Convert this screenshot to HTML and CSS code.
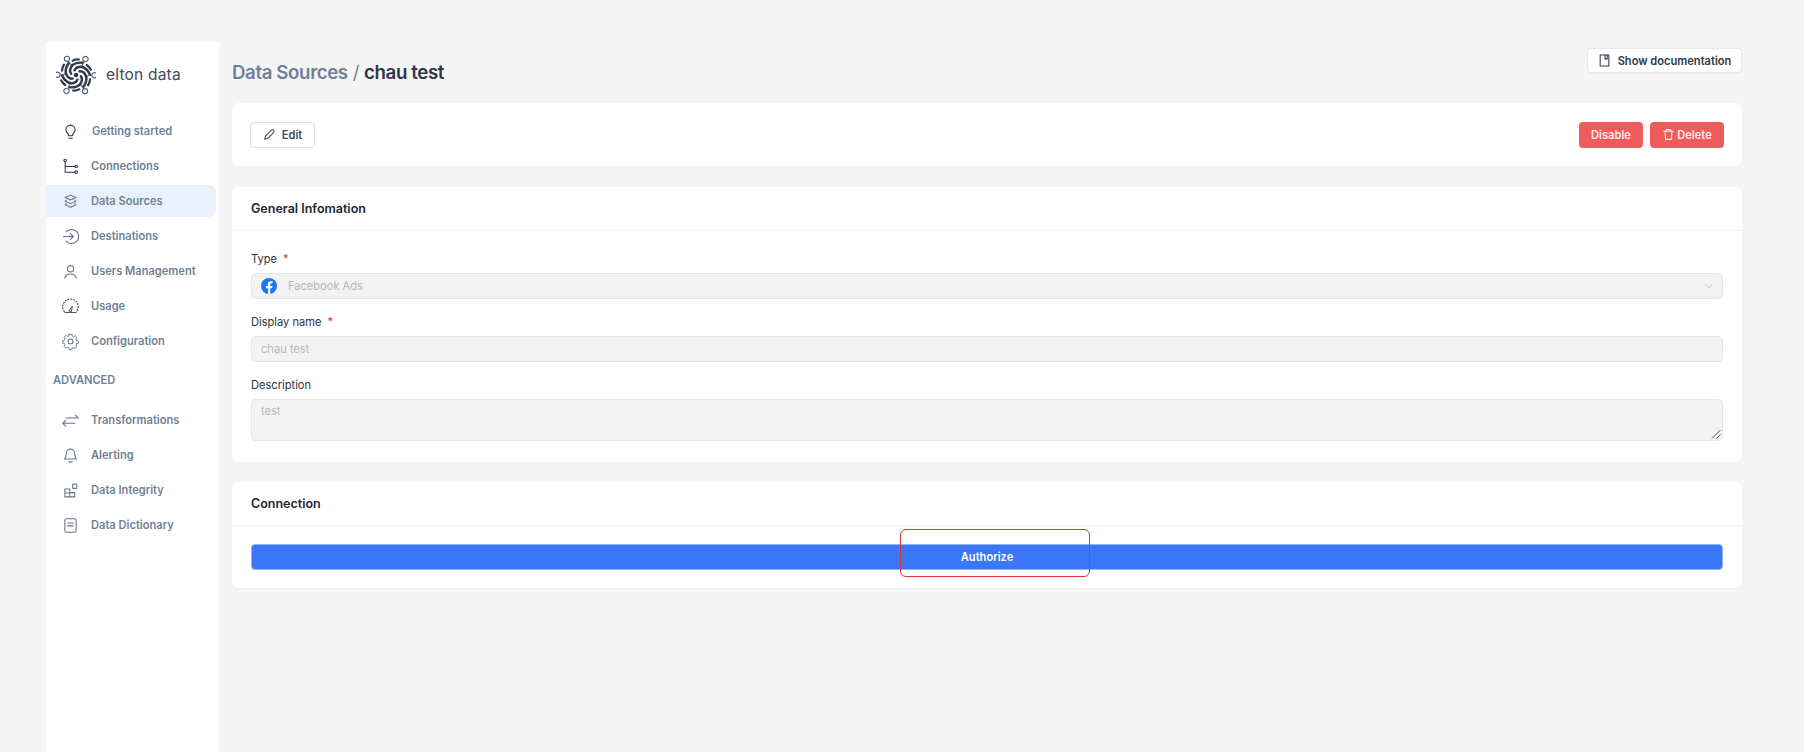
FILE: index.html
```html
<!DOCTYPE html>
<html lang="en">
<head>
<meta charset="utf-8">
<title>chau test</title>
<link rel="stylesheet" href="styles.css">
</head>
<body>
<div class="app">
  <aside class="sidebar">
    <div class="brand">
      <svg class="logo" viewBox="-21 -21 42 42" fill="none" stroke="#2f3b4d" stroke-width="2.600" stroke-linecap="round">
        <defs>
          <g id="arm">
            <path d="M-1.500-5C-.5-7.500 3-9 7-8.500"/>
            <path d="M-4.500-9.500C-2-12 2-13.500 7-12.800"/>
            <path d="M-3.500-15C-1.500-16 1-16.500 3-16.300" stroke-width="2.300"/>
          </g>
          <g id="ring">
            <path d="M-8-14.500L-5.500-11" stroke="#556173" stroke-width="1.100"/>
            <circle cx="-9.500" cy="-17" r="2.700" fill="#fff" stroke="#556173" stroke-width="1.200"/>
          </g>
        </defs>
        <use href="#arm"/>
        <use href="#arm" transform="rotate(60)"/>
        <use href="#arm" transform="rotate(120)"/>
        <use href="#arm" transform="rotate(180)"/>
        <use href="#arm" transform="rotate(240)"/>
        <use href="#arm" transform="rotate(300)"/>
        <use href="#ring"/>
        <use href="#ring" transform="rotate(60)"/>
        <use href="#ring" transform="rotate(120)"/>
        <use href="#ring" transform="rotate(180)"/>
        <use href="#ring" transform="rotate(240)"/>
        <use href="#ring" transform="rotate(300)"/>
        <circle r="2.400" fill="#2f3b4d" stroke="none"/>
      </svg>
      <span class="brand-name">elton data</span>
    </div>
    <nav class="nav">
      <a class="nav-item nav-item-first">
        <svg class="icon icon-dark" viewBox="0 0 24 24"><path d="M9.500 21.500h5M9 18h6M8 14.500C6.300 13.200 5.500 11.500 5.500 9.500a6.500 6.500 0 0 1 13 0c0 2-.8 3.700-2.500 5-.7.600-1 1.300-1 3.500H9c0-2.200-.3-2.900-1-3.500z"/></svg>
        <span>Getting started</span>
      </a>
      <a class="nav-item">
        <svg class="icon icon-dark" viewBox="0 0 24 24"><circle cx="4.500" cy="3.500" r="1.800"/><circle cx="20" cy="12" r="1.800"/><circle cx="20" cy="20" r="1.800"/><path d="M4.500 5.500V20H18M4.500 12H18"/></svg>
        <span>Connections</span>
      </a>
      <a class="nav-item nav-item-active">
        <svg class="icon" viewBox="0 0 24 24"><path d="M12 3l7.500 3.500L12 10 4.500 6.500zM6 10l-1.500 1.500L12 15l7.500-3.500L18 10M6 15l-1.500 1.500L12 20l7.500-3.500L18 15"/></svg>
        <span>Data Sources</span>
      </a>
      <a class="nav-item">
        <svg class="icon" viewBox="0 0 24 24"><path d="M2 12h14M12 8l4 4-4 4M6 5.500a10 10 0 1 1 0 13"/></svg>
        <span>Destinations</span>
      </a>
      <a class="nav-item">
        <svg class="icon" viewBox="0 0 24 24"><circle cx="12" cy="8" r="4.500"/><path d="M4 21.500c.5-4 3.500-6 8-6s7.500 2 8 6"/></svg>
        <span>Users Management</span>
      </a>
      <a class="nav-item">
        <svg class="icon icon-dark" viewBox="0 0 24 24"><path d="M3.500 19.500a11 11 0 1 1 17 0" stroke-dasharray="2.500 1.500" stroke-linecap="butt"/><path d="M4 20.500h16" stroke-width="1.200"/><path d="M10 18l4.500-6.500-1 7z" stroke-width="1.200"/></svg>
        <span>Usage</span>
      </a>
      <a class="nav-item">
        <svg class="icon" viewBox="0 0 24 24"><circle cx="12" cy="12" r="3.500"/><path d="M10 2h4l.7 2.800 2 .9 2.500-1.500 2.800 2.800-1.500 2.500.9 2 2.800.7v4l-2.800.7-.9 2 1.500 2.500-2.800 2.800-2.500-1.500-2 .9L14 26h-4l-.7-2.800-2-.9-2.500 1.500L2 21l1.500-2.500-.9-2-2.800-.7v-4l2.800-.7.9-2L2 6.600l2.800-2.800 2.500 1.500 2-.9z" transform="translate(1.200) scale(.9)"/></svg>
        <span>Configuration</span>
      </a>
    </nav>
    <div class="nav-heading">ADVANCED</div>
    <nav class="nav">
      <a class="nav-item">
        <svg class="icon" viewBox="0 0 24 24"><path d="M6 8.500h17M19 4.500l4 4M1 16h17M5 12l-4 4 4 4"/></svg>
        <span>Transformations</span>
      </a>
      <a class="nav-item">
        <svg class="icon" viewBox="0 0 24 24"><path d="M12 3a6 6 0 0 0-6 6c0 5-1 6.500-2.500 8h17C19 15.500 18 14 18 9a6 6 0 0 0-6-6zM9.500 20.500c1.200 1 3.800 1 5 0"/></svg>
        <span>Alerting</span>
      </a>
      <a class="nav-item">
        <svg class="icon" viewBox="0 0 24 24"><path d="M4 10h7v11H4zM11 15h7v6h-7zM4 15.500h7"/><rect x="15" y="3" width="6" height="6" rx="1"/></svg>
        <span>Data Integrity</span>
      </a>
      <a class="nav-item">
        <svg class="icon" viewBox="0 0 24 24"><rect x="4" y="2.500" width="16" height="19" rx="2.500"/><path d="M8 8.500h8M8 12.500h8"/></svg>
        <span>Data Dictionary</span>
      </a>
    </nav>
  </aside>

  <main class="main">
    <header class="page-header">
      <h1 class="crumbs"><span class="crumb-parent">Data Sources</span><span class="crumb-sep">/</span><span class="crumb-current">chau test</span></h1>
      <button class="btn btn-doc">
        <svg class="btn-icon" viewBox="0 0 24 24"><path d="M4 2h16v20H4zM13 2v7h4V2"/></svg>
        Show documentation
      </button>
    </header>

    <section class="card card-actions">
      <button class="btn btn-edit">
        <svg class="btn-icon" viewBox="0 0 24 24"><path d="M3 21l1.500-6L15.500 4c1.500-1.500 3.500-1.500 4.500 0s1 3-.5 4.500L8.500 19.500z"/></svg>
        Edit
      </button>
      <div class="action-group">
        <button class="btn btn-danger">Disable</button>
        <button class="btn btn-danger btn-delete">
          <svg class="btn-icon" viewBox="0 0 24 24"><path d="M3 6h18M8 6V3h8v3M5.500 6l1 15h11l1-15"/></svg>
          Delete
        </button>
      </div>
    </section>

    <section class="card">
      <h2 class="card-title">General Infomation</h2>
      <div class="card-body form">
        <div class="field">
          <label class="label">Type <span class="req">*</span></label>
          <div class="input input-select">
            <svg class="fb" viewBox="0 0 24 24"><circle cx="12" cy="12" r="12" fill="#1877f2"/><path fill="#fff" d="M16.700 15.500l.5-3.500h-3.300V9.800c0-1 .5-1.900 2-1.900h1.500v-3s-1.400-.2-2.700-.2c-2.700 0-4.500 1.600-4.500 4.600V12H7.500v3.500h3.200V24h3.200v-8.500z"/></svg>
            <span class="select-value">Facebook Ads</span>
            <svg class="chevron" viewBox="0 0 12 8"><path d="M1 1l5 5.500L11 1"/></svg>
          </div>
        </div>
        <div class="field">
          <label class="label">Display name <span class="req">*</span></label>
          <div class="input">chau test</div>
        </div>
        <div class="field">
          <label class="label">Description</label>
          <div class="input input-area">test
            <svg class="grip" viewBox="0 0 10 10"><path d="M1 9.500L9.500 1M5.500 9.500l4-4"/></svg>
          </div>
        </div>
      </div>
    </section>

    <section class="card card-last">
      <h2 class="card-title">Connection</h2>
      <div class="card-body">
        <button class="btn btn-primary">Authorize</button>
      </div>
    </section>
  </main>
</div>
<div class="annotation"></div>
</body>
</html>
```
FILE: styles.css
```css
* { box-sizing: border-box; }

html, body { height: 100%; }

body {
  margin: 0;
  background: #f5f5f5;
  font-family: Inter, "Liberation Sans", sans-serif;
  color: #1f2937;
  overflow: hidden;
}

.app {
  display: flex;
  align-items: stretch;
  height: 100%;
  padding: 42px 62px 0 46px;
  gap: 13px;
}

.sidebar {
  width: 173px;
  flex: none;
  background: #fff;
}

.brand {
  display: flex;
  align-items: center;
  height: 66px;
  padding-left: 10px;
  gap: 10px;
  margin-bottom: 7px;
}

.logo { width: 40px; height: 40px; flex: none; }

.brand-name {
  font-size: 15.500px;
  line-height: 20px;
  color: #3f4a5a;
  letter-spacing: 0.2px;
}

.nav { display: flex; flex-direction: column; gap: 3px; }

.nav-item {
  display: flex;
  align-items: center;
  width: 170px;
  height: 32px;
  padding-left: 16px;
  gap: 12px;
  font-size: 11.100px;
  font-weight: 600;
  color: #718096;
  border-radius: 0 8px 8px 0;
}

.nav-item-first { gap: 13px; }

.nav-item-active { background: #e8f2fc; }

.icon {
  width: 17px;
  height: 17px;
  flex: none;
  fill: none;
  stroke: #667489;
  stroke-width: 1.500;
  stroke-linecap: round;
  stroke-linejoin: round;
}

.icon-dark { stroke: #2d3748; }

.nav-heading {
  height: 20px;
  margin: 13px 0 14px 7px;
  font-size: 11.100px;
  line-height: 20px;
  font-weight: 600;
  color: #718096;
}

.main { flex: 1; min-width: 0; }

.page-header {
  display: flex;
  align-items: flex-start;
  justify-content: space-between;
  height: 61px;
  padding-top: 6px;
}

.crumbs {
  display: flex;
  align-items: center;
  gap: 5px;
  margin: 9px 0 0;
  font-size: 18.700px;
  line-height: 32px;
  font-weight: 600;
  letter-spacing: -0.4px;
}

.crumb-parent { color: #718096; }
.crumb-sep { color: #718096; font-weight: 400; }
.crumb-current { color: #2d3748; }

.btn {
  display: inline-flex;
  align-items: center;
  justify-content: center;
  gap: 5px;
  font-family: inherit;
  font-size: 11.100px;
  font-weight: 600;
  white-space: nowrap;
  border-radius: 4px;
  border: 1px solid transparent;
  cursor: pointer;
}

.btn-icon {
  width: 13px;
  height: 13px;
  fill: none;
  stroke: currentColor;
  stroke-width: 1.900;
  stroke-linejoin: round;
  stroke-linecap: round;
}

.btn-doc {
  width: 155px;
  height: 25px;
  gap: 7px;
  background: #fff;
  color: #2d3748;
  border-color: #e5e7eb;
  box-shadow: 0 1px 1px rgba(0, 0, 0, 0.04);
}

.card {
  background: #fff;
  border-radius: 6px;
  margin-bottom: 20px;
  box-shadow: 0 1px 1px rgba(0, 0, 0, 0.03);
}

.card-actions {
  display: flex;
  align-items: center;
  justify-content: space-between;
  height: 63px;
  margin-bottom: 21px;
  padding: 0 18px;
}

.btn-edit {
  width: 65px;
  height: 26px;
  gap: 6px;
  background: #fff;
  color: #3f4a5a;
  border-color: #dde1e7;
}

.action-group { display: flex; gap: 7px; }

.btn-danger {
  height: 26px;
  width: 64px;
  padding: 0;
  background: #ef5b5b;
  color: #fdeeee;
}

.btn-delete { width: 74px; gap: 2px; }

.card-title {
  margin: 0;
  height: 44px;
  padding: 0 19px;
  font-size: 12.500px;
  line-height: 44px;
  font-weight: 600;
  color: #1f2430;
  border-bottom: 1px solid #f1f1f1;
}

.card-body { padding: 18px 19px; }

.form {
  display: flex;
  flex-direction: column;
  gap: 13px;
  padding-top: 18px;
  padding-bottom: 21px;
}

.field { display: flex; flex-direction: column; gap: 4px; }

.label {
  font-size: 11.100px;
  line-height: 20px;
  color: #2d3340;
}

.req { color: #e3342f; margin-left: 3px; }

.input {
  height: 26px;
  padding: 0 9px;
  background: #f3f3f3;
  border: 1px solid #e6e6e6;
  border-radius: 5px;
  font-size: 11.100px;
  line-height: 24px;
  color: #b7b7b7;
}

.input-select {
  display: flex;
  align-items: center;
  gap: 11px;
}

.fb { width: 16px; height: 16px; flex: none; }

.select-value { flex: 1; }

.chevron {
  width: 9px;
  height: 6px;
  fill: none;
  stroke: #bdbdbd;
  stroke-width: 1.200;
}

.input-area {
  position: relative;
  height: 42px;
  line-height: 22px;
}

.grip {
  position: absolute;
  right: 1px;
  bottom: 1px;
  width: 10px;
  height: 10px;
  fill: none;
  stroke: #555;
  stroke-width: 1;
}

.btn-primary {
  display: flex;
  width: 100%;
  height: 26px;
  background: #3a76f6;
  color: #fff;
  border-color: #8fb3f8;
}

.annotation {
  position: absolute;
  left: 900px;
  top: 529px;
  width: 190px;
  height: 48px;
  border: 1.500px solid #e5302b;
  border-radius: 6px;
}
```
